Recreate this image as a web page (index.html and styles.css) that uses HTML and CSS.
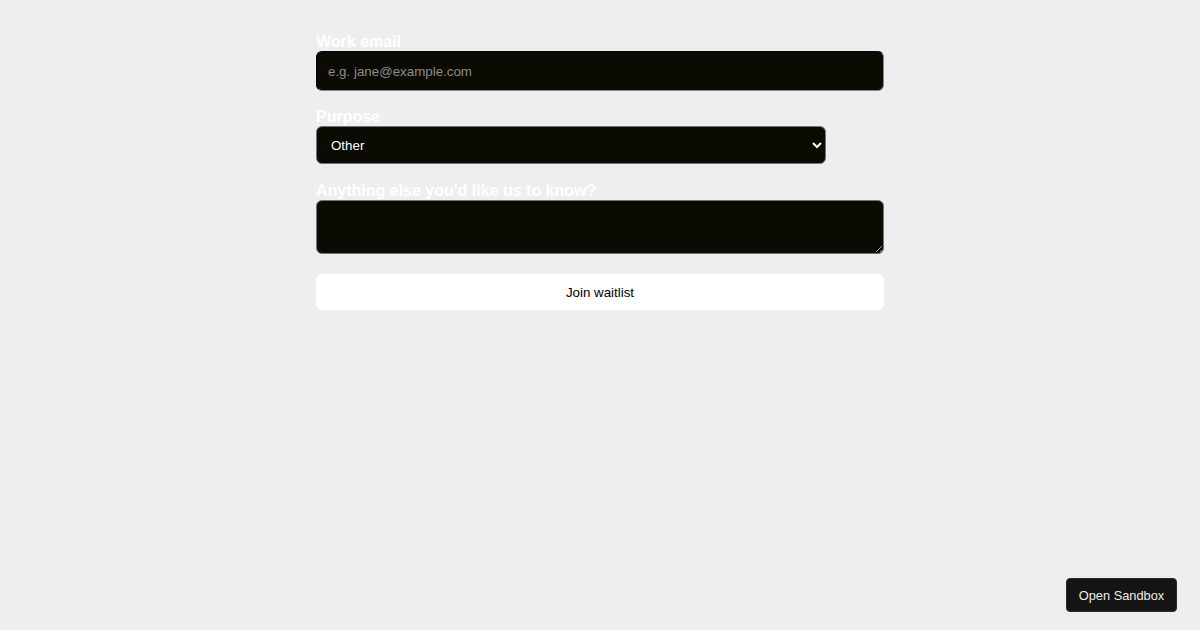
FILE: index.html
```html
<!DOCTYPE html>
<html lang="en">
<head>
<meta charset="utf-8">
<title>Join waitlist</title>
<link rel="stylesheet" href="styles.css">
</head>
<body>
<form class="form">
  <div class="field">
    <label class="label" for="email">Work email</label>
    <input class="control input-email" id="email" type="email" placeholder="e.g. jane@example.com">
  </div>
  <div class="field field-select">
    <label class="label" for="purpose">Purpose</label>
    <select class="control select" id="purpose">
      <option>Other</option>
    </select>
  </div>
  <div class="field">
    <label class="label" for="notes">Anything else you'd like us to know?</label>
    <textarea class="control textarea" id="notes"></textarea>
  </div>
  <button class="submit" type="button">Join waitlist</button>
</form>
<button class="sandbox" type="button">Open Sandbox</button>
</body>
</html>
```
FILE: styles.css
```css
html, body {
  margin: 0;
  padding: 0;
  background: #eeeeee;
  font-family: "Liberation Sans", Arial, sans-serif;
}

.form {
  width: 568px;
  margin: 0 auto;
  padding-top: 33px;
  display: flex;
  flex-direction: column;
  gap: 17px;
}

.field {
  display: flex;
  flex-direction: column;
  align-items: flex-start;
}

.field-select {
  margin-bottom: 1px;
}

.label {
  color: #ffffff;
  font-weight: bold;
  font-size: 16px;
  line-height: 18px;
}

.control {
  box-sizing: border-box;
  background: #0b0a03;
  color: #ffffff;
  font-family: "Liberation Sans", Arial, sans-serif;
  font-size: 13.333px;
  border: 1px solid #747474;
  border-radius: 6px;
  margin: 0;
}

.input-email {
  width: 568px;
  height: 40px;
  padding: 0 11px;
  border: 1px inset #8a8a8a;
  border-top-color: #2c2c2c;
  border-left-color: #2c2c2c;
}

.input-email::placeholder {
  color: #8c8c8c;
}

.select {
  width: 510px;
  height: 38px;
  padding: 0 10px;
  color-scheme: dark;
}

.textarea {
  width: 568px;
  height: 54px;
  padding: 8px 11px;
  color-scheme: dark;
}

.submit {
  margin-top: 3px;
  width: 568px;
  height: 36px;
  background: #ffffff;
  color: #000000;
  border: none;
  border-radius: 6px;
  font-family: "Liberation Sans", Arial, sans-serif;
  font-size: 13.333px;
}

.sandbox {
  position: fixed;
  right: 23px;
  bottom: 18px;
  width: 111px;
  height: 34px;
  background: #141414;
  color: #eeeeee;
  border: 1px solid #2a2a2a;
  border-radius: 4px;
  font-family: "Liberation Sans", Arial, sans-serif;
  font-size: 12.8px;
  padding: 0;
}
```
